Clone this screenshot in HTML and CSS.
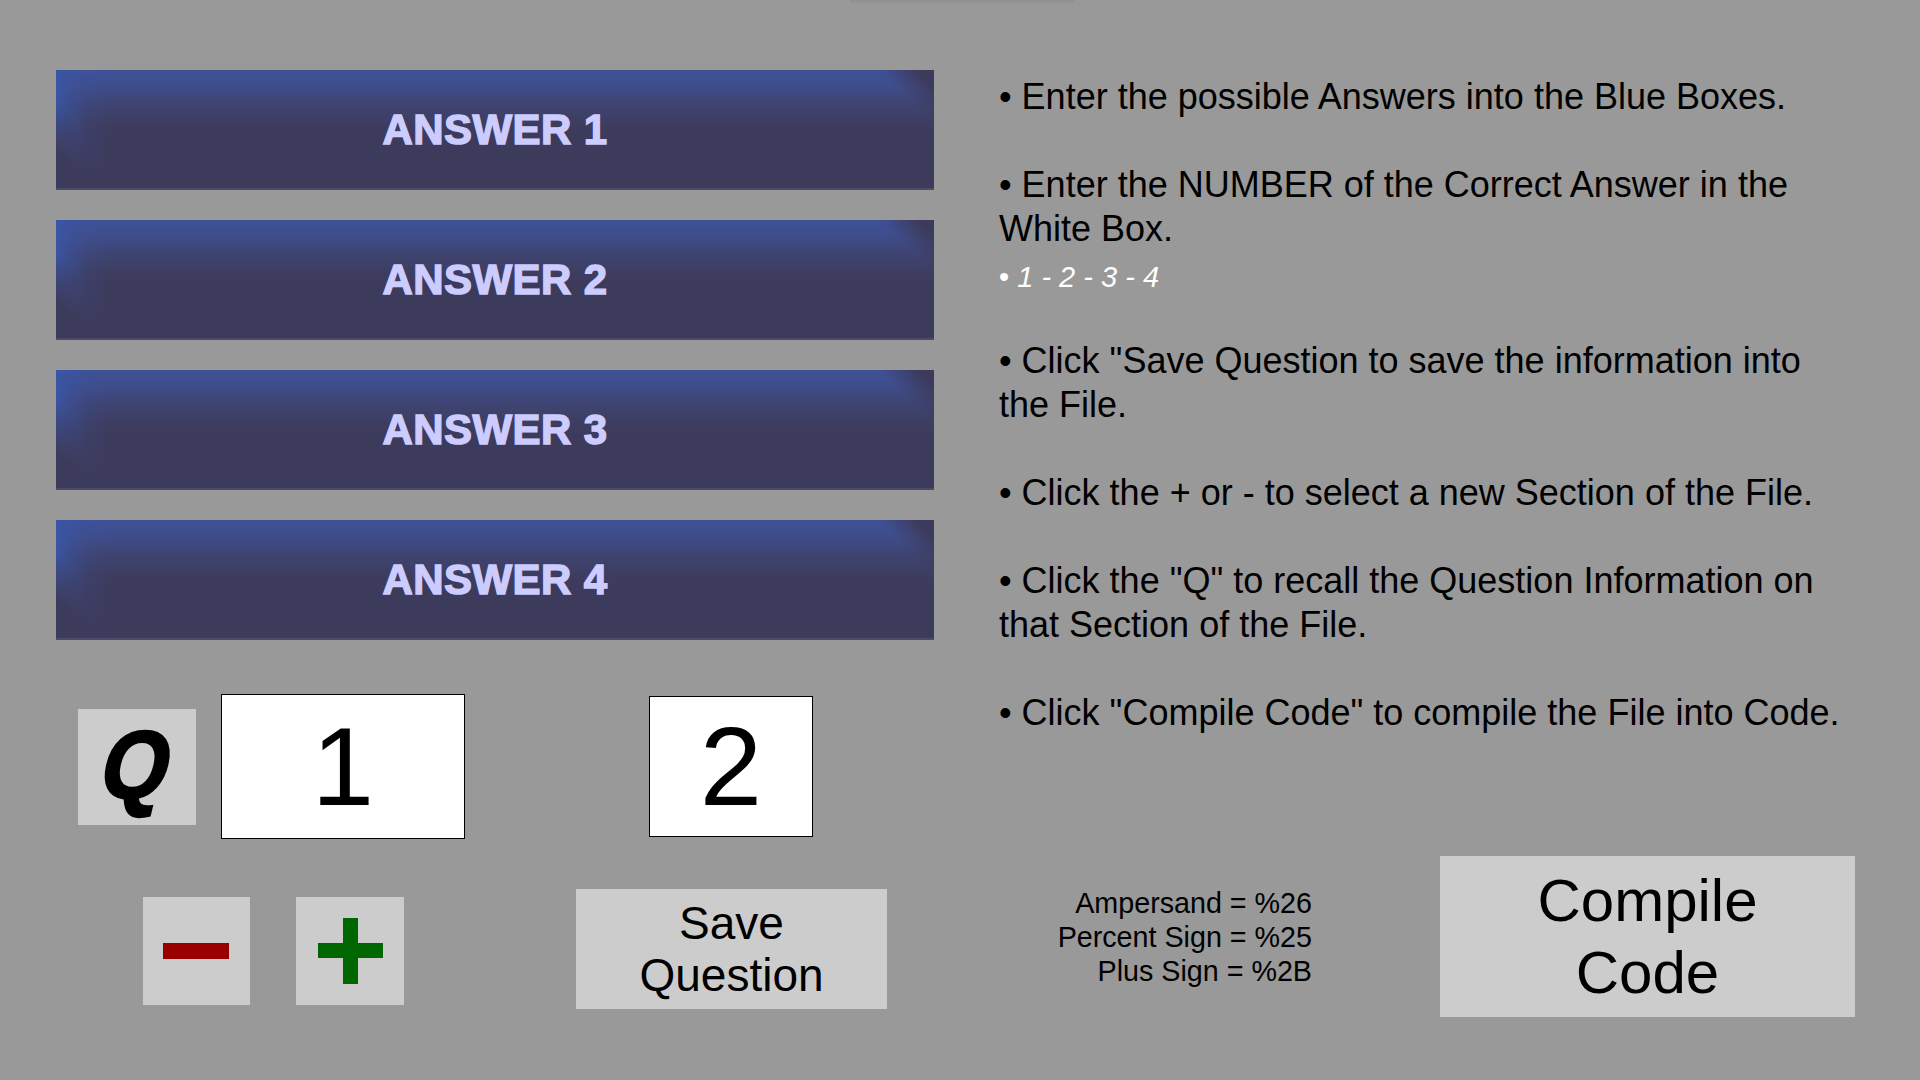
FILE: index.html
```html
<!DOCTYPE html>
<html lang="en">
<head>
<meta charset="utf-8">
<title>Question Editor</title>
<link rel="stylesheet" href="styles.css">
</head>
<body>
<div class="topline"></div>
<main class="page">
  <section class="left">
    <div class="answers">
      <div class="answer">ANSWER 1</div>
      <div class="answer">ANSWER 2</div>
      <div class="answer">ANSWER 3</div>
      <div class="answer">ANSWER 4</div>
    </div>
    <div class="qrow">
      <div class="qbtn"><span class="qglyph">Q</span></div>
      <div class="numbox num1">1</div>
      <div class="numbox num2">2</div>
    </div>
    <div class="ctrlrow">
      <div class="sq minus">
        <svg viewBox="0 0 107 108" width="107" height="108"><rect x="20" y="46" width="66" height="16" fill="#990000"/></svg>
      </div>
      <div class="sq plus">
        <svg viewBox="0 0 108 108" width="108" height="108"><rect x="22" y="46" width="65" height="15" fill="#006600"/><rect x="47" y="21" width="15" height="66" fill="#006600"/></svg>
      </div>
      <div class="save">Save<br>Question</div>
    </div>
  </section>
  <section class="right">
    <div class="instructions">
      <p>• Enter the possible Answers into the Blue Boxes.</p>
      <p class="withhint">• Enter the NUMBER of the Correct Answer in the White Box.<span class="hint">• <i>1 - 2 - 3 - 4</i></span></p>
      <p>• Click "Save Question to save the information into the File.</p>
      <p>• Click the + or - to select a new Section of the File.</p>
      <p>• Click the "Q" to recall the Question Information on that Section of the File.</p>
      <p>• Click "Compile Code" to compile the File into Code.</p>
    </div>
    <div class="bottom">
      <div class="codes">Ampersand = %26<br>Percent Sign = %25<br>Plus Sign = %2B</div>
      <div class="compile">Compile<br>Code</div>
    </div>
  </section>
</main>
</body>
</html>
```

FILE: styles.css
```css
html, body {
  margin: 0;
  padding: 0;
}
body {
  width: 1920px;
  height: 1080px;
  overflow: hidden;
  background: #999999;
  font-family: "Liberation Sans", Arial, sans-serif;
  color: #000;
}
.topline {
  height: 4px;
  width: 225px;
  margin-left: 850px;
  background: linear-gradient(to bottom, #8e8e8e, #999999);
}
.page {
  display: flex;
  padding-top: 66px;
}
.left {
  margin-left: 56px;
  width: 878px;
  display: flex;
  flex-direction: column;
}
.answers {
  display: flex;
  flex-direction: column;
  gap: 30px;
}
.answer {
  height: 120px;
  display: flex;
  align-items: center;
  justify-content: center;
  color: #ccccff;
  font-size: 42px;
  font-weight: bold;
  -webkit-text-stroke: 1.4px #ccccff;
  letter-spacing: 0.4px;
  box-shadow: inset 0 -2px 0 #4d4c68;
  background:
    linear-gradient(225deg, #3d3b5c 0, #3d3b5c 1.8%, rgba(61, 59, 92, 0) 5.5%),
    linear-gradient(45deg, #3d3b5c 0, #3d3b5c 4%, rgba(61, 59, 92, 0) 9%),
    linear-gradient(to right, rgba(58, 86, 166, 0.95) 0, rgba(58, 86, 166, 0.55) 1.2%, rgba(58, 86, 166, 0.15) 3.5%, rgba(58, 86, 166, 0) 6%),
    linear-gradient(to bottom, #3e5198 0%, #3f4c8a 14%, #3e436f 30%, #3d3d60 45%, #3d3b5c 55%, #3d3b5c 100%);
}
.qrow {
  margin-top: 54px;
  height: 145px;
  display: flex;
  align-items: center;
}
.qbtn {
  margin-left: 22px;
  width: 118px;
  height: 116px;
  box-sizing: border-box;
  padding-bottom: 4px;
  background: #cccccc;
  display: flex;
  align-items: center;
  justify-content: center;
  font-size: 96px;
  font-weight: bold;
}
.qglyph {
  display: inline-block;
  transform: skewX(-13deg) scaleX(0.9);
  -webkit-text-stroke: 2.5px #000;
}
.numbox {
  box-sizing: border-box;
  background: #ffffff;
  border: 1px solid #000;
  display: flex;
  align-items: center;
  justify-content: center;
  font-size: 112px;
}
.num1 {
  margin-left: 25px;
  width: 244px;
  height: 145px;
}
.num2 {
  margin-left: 184px;
  width: 164px;
  height: 141px;
}
.ctrlrow {
  margin-top: 50px;
  height: 120px;
  display: flex;
  align-items: flex-start;
}
.sq {
  margin-top: 8px;
  background: #cccccc;
  height: 108px;
  display: flex;
}
.sq svg {
  display: block;
}
.minus {
  margin-left: 87px;
  width: 107px;
}
.plus {
  margin-left: 46px;
  width: 108px;
}
.save {
  margin-left: 172px;
  width: 311px;
  height: 120px;
  background: #cccccc;
  display: flex;
  align-items: center;
  justify-content: center;
  text-align: center;
  font-size: 46px;
  line-height: 52px;
}
.right {
  margin-left: 65px;
  width: 856px;
  display: flex;
  flex-direction: column;
}
.instructions {
  width: 850px;
  padding-top: 5px;
  font-size: 36px;
  line-height: 44px;
}
.instructions p {
  margin: 0 0 44px 0;
}
.instructions p.withhint {
  margin-bottom: 36px;
}
.instructions p:last-child {
  margin-bottom: 0;
}
.hint {
  display: block;
  color: #ffffff;
  font-size: 29px;
  line-height: 52px;
}
.bottom {
  margin-top: 121px;
  display: flex;
  justify-content: flex-end;
  align-items: center;
  gap: 128px;
}
.codes {
  text-align: right;
  font-size: 28.7px;
  line-height: 34px;
}
.compile {
  width: 415px;
  height: 161px;
  background: #cccccc;
  display: flex;
  align-items: center;
  justify-content: center;
  text-align: center;
  font-size: 60px;
  line-height: 72px;
}
```
